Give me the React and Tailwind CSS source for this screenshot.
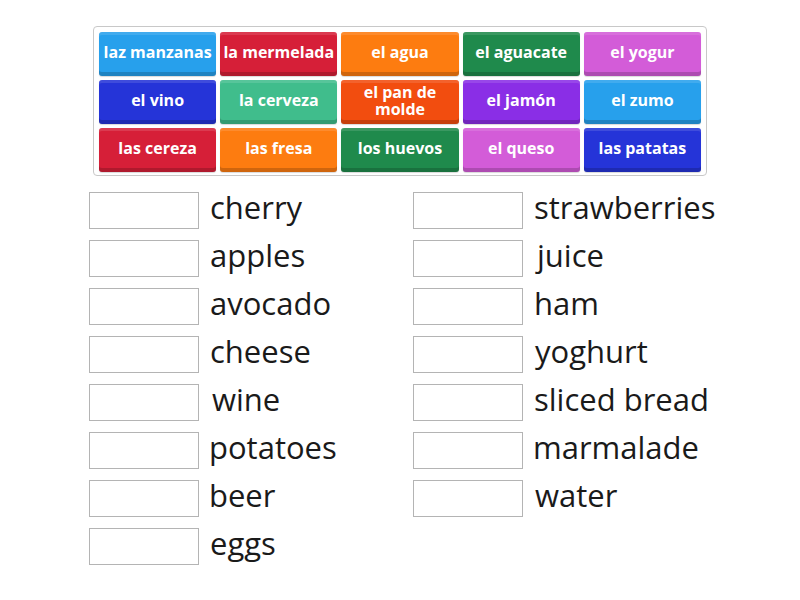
import React from "react";

const tiles = [
  ["laz manzanas", "bg-[#27a0ec]"],
  ["la mermelada", "bg-[#d61f38]"],
  ["el agua", "bg-[#fd7c10]"],
  ["el aguacate", "bg-[#1f8a4c]"],
  ["el yogur", "bg-[#d35cd8]"],
  ["el vino", "bg-[#2534d8]"],
  ["la cerveza", "bg-[#40bd8c]"],
  ["el pan de molde", "bg-[#f24d0f]"],
  ["el jamón", "bg-[#8a2ee6]"],
  ["el zumo", "bg-[#27a0ec]"],
  ["las cereza", "bg-[#d61f38]"],
  ["las fresa", "bg-[#fd7c10]"],
  ["los huevos", "bg-[#1f8a4c]"],
  ["el queso", "bg-[#d35cd8]"],
  ["las patatas", "bg-[#2534d8]"],
];

const left = [
  ["cherry", "ml-[11px]"],
  ["apples", "ml-[11px]"],
  ["avocado", "ml-[11px]"],
  ["cheese", "ml-[11px]"],
  ["wine", "ml-[13px]"],
  ["potatoes", "ml-[10px]"],
  ["beer", "ml-[10px]"],
  ["eggs", "ml-[11px]"],
];
const right = [
  ["strawberries", "ml-[11px]"],
  ["juice", "ml-[14px]"],
  ["ham", "ml-[11px]"],
  ["yoghurt", "ml-[12px]"],
  ["sliced bread", "ml-[11px]"],
  ["marmalade", "ml-[10px]"],
  ["water", "ml-[12px]"],
];

function Row({ word, ml }) {
  return (
    <div className="flex items-center h-[37px] mb-[11px]">
      <div className="w-[110px] h-[37px] border border-[#b4b4b4] bg-white shrink-0" />
      <div className={`${ml} text-[31px] leading-none text-[#1a1a1a] -mt-[7px]`}>{word}</div>
    </div>
  );
}

export default function App() {
  return (
    <div
      className="w-[800px] h-[600px] bg-white relative"
      style={{ fontFamily: '"Open Sans", sans-serif' }}
    >
      <div className="pt-[26px] pl-[93px]">
        <div className="w-[614px] h-[150px] border border-[#c8c8c8] rounded-[4px] px-[5px] pt-[5px] grid grid-cols-5 gap-x-[4px] gap-y-[4px] auto-rows-[44px]">
          {tiles.map(([t, c]) => (
            <div
              key={t}
              className={`${c} rounded-[3px] flex items-center justify-center text-center text-white font-bold text-[16px] leading-[17px] shadow-[inset_0_-4px_0_rgba(0,0,0,0.18),inset_0_3px_0_rgba(255,255,255,0.12),0_1px_1px_rgba(0,0,0,0.15)] px-[2px] pb-[3px]`}
            >
              <span className={t === "el pan de molde" ? "w-[80px]" : "whitespace-nowrap"}>{t}</span>
            </div>
          ))}
        </div>
      </div>
      <div className="flex mt-[16px] pl-[89px]">
        <div className="w-[324px]">
          {left.map(([w, ml]) => (
            <Row key={w} word={w} ml={ml} />
          ))}
        </div>
        <div>
          {right.map(([w, ml]) => (
            <Row key={w} word={w} ml={ml} />
          ))}
        </div>
      </div>
    </div>
  );
}
